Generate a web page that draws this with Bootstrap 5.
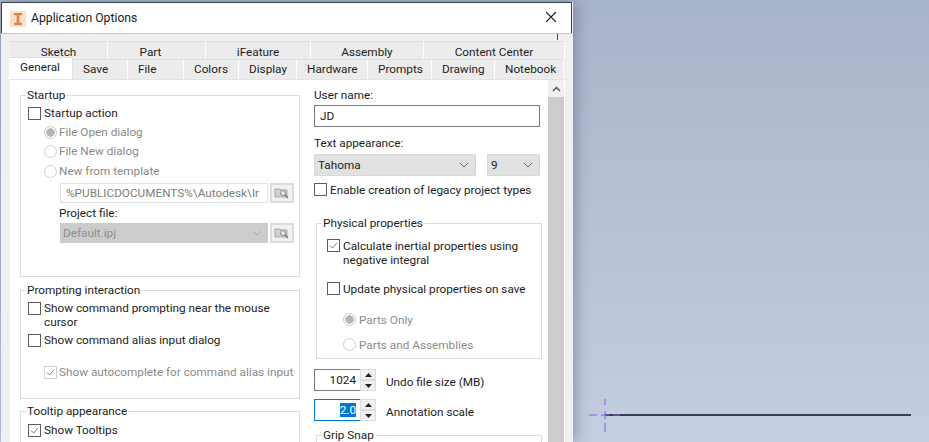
<!DOCTYPE html>
<html lang="en">
<head>
<meta charset="utf-8">
<title>Application Options</title>
<link href="https://cdn.jsdelivr.net/npm/bootstrap@5.3.0/dist/css/bootstrap.min.css" rel="stylesheet">
<style>
html,body{height:442px;overflow:hidden}
body{background:linear-gradient(180deg,#a8b4c9 0%,#b6c1d5 50%,#c3cee0 100%);font:11.750px/14px Roboto,"Noto Sans",sans-serif;color:#1c1c1c}
.app-window{width:572px;height:440px;margin-top:2px;margin-left:1px;background:#f0f0f0;box-shadow:2px 0 14px rgba(60,70,90,.45);overflow:hidden}
.title-strip{height:31px;width:571px;background:#fff;border:1px solid #3c4350;border-bottom:0;padding-left:8px;font-size:12.200px}
.title-rule{height:1px;background:#c9c9c9}
.app-mark{width:16px;height:16px;background:#fbe0c8;margin-right:5px;margin-top:1px}
.title-text{margin-top:-1px}
.x-btn{width:14px;height:14px;margin-right:13px;margin-top:-3px}
.tick{width:1px;height:6px;background:#444;margin-left:556px;margin-bottom:1px}
.tab-rows{margin-left:9px;width:555px}
.tab-row{flex-wrap:nowrap;border:0;margin:0}
.tab-row .nav-link{border:0;border-radius:0;padding:0;margin:0;color:#1c1c1c;background:#ececec;text-align:center;font-size:11.750px;border-top:1px solid #dedede;border-right:1px solid #fff}
.row-back .nav-link{height:18px;line-height:20px}
.row-back .nav-item:nth-child(2) .nav-link{padding-right:12px}
.row-front{height:20px;margin-left:-1px}
.row-front .nav-link{height:20px;line-height:19px;text-align:left;padding-left:10px}
.row-front .nav-link.active{height:22px;margin-top:-2px;padding-left:11px;background:#fff;color:#1c1c1c;border-top:1px solid #dedede;position:relative;z-index:1;line-height:19px}
.row-back .nav-item:nth-child(1){width:98px}.row-back .nav-item:nth-child(2){width:98px}.row-back .nav-item:nth-child(3){width:105px}.row-back .nav-item:nth-child(4){width:113px}.row-back .nav-item:nth-child(5){width:141px}
.row-front .nav-item:nth-child(1){width:64px}.row-front .nav-item:nth-child(2){width:55px}.row-front .nav-item:nth-child(3){width:56px}.row-front .nav-item:nth-child(4){width:55px}.row-front .nav-item:nth-child(5){width:58px}.row-front .nav-item:nth-child(6){width:71px}.row-front .nav-item:nth-child(7){width:64px}.row-front .nav-item:nth-child(8){width:63px}.row-front .nav-item:nth-child(9){width:69px}
.pane-wrap{margin-left:9px;width:555px;height:363px;background:#fff;border-top:1px solid #e3e3e3;overflow:hidden}
.pane-scroll{width:538px;padding:8px 0 0 10px;overflow:hidden;height:363px}
.col-left{width:280px;margin-right:14px;flex:none}
.col-right{width:228px;flex:none}
.vbar{width:16px;flex:none;background:#cdcdcd}
.vbar-up{height:17px;background:#f0f0f0;display:flex;align-items:center;justify-content:center}
.group-box{border:1px solid #dcdcdc;margin:0;padding:0 0 0 7px;min-width:0}
.group-box legend{float:none;width:auto;font-size:11.750px;line-height:14px;margin:0 0 0 -2px;padding:0 1px}
.box-phys legend{margin-left:-5px}
.box-startup{height:189px}
.box-prompt{height:116px;margin-top:6px}
.box-tip{height:60px;margin-top:5px}
.box-phys{height:143px;margin:19px 0 0 2px;width:226px;padding-left:10px}
.box-grip{height:40px;margin:7px 0 0 2px;width:226px}
.opt{display:flex;align-items:flex-start;margin:0;padding:0;min-height:13px}
.opt .form-check-input{width:13px;height:13px;margin:0 3px 0 0;flex:none;border:1px solid #5c5c5c;border-radius:0;background-color:#fff;box-shadow:none;float:none}
.opt .form-check-input[type=radio]{border-radius:50%;border-color:#c8c8c8}
.opt .form-check-input:checked[type=checkbox]{background-image:url("data:image/svg+xml,%3csvg xmlns='http://www.w3.org/2000/svg' viewBox='0 0 13 13'%3e%3cpath fill='none' stroke='%23666' stroke-width='1' d='M2.500 6.500l3 3 5-6'/%3e%3c/svg%3e");background-size:100%}
.opt .form-check-input:checked[type=radio]{background-image:none;background:radial-gradient(circle,#b5b5b5 0 4px,#fff 4.500px);border-color:#c8c8c8}
.opt .form-check-input:disabled{opacity:1;border-color:#cfcfcf}
.opt .form-check-input:disabled~.form-check-label{opacity:1;color:#8a8a8a}
.opt .form-check-label{line-height:14px;font-size:11.750px;color:#1c1c1c}
.col-left .opt .form-check-label{margin-top:-1px;margin-bottom:1px}
.col-left .ind16 .form-check-input{margin-right:2px}
.ind16{margin-left:16px}
.path-row{margin:4px 0 0 32px}
.path-field.form-control{width:208px;height:20px;padding:0 0 0 5px;font-size:11.750px;line-height:18px;border:1px solid #e2e2e2;border-radius:0;background:#fff;color:#7d7d7d;overflow:hidden;white-space:nowrap;box-shadow:none}
.browse-btn.btn{width:24px;height:20px;margin-left:2px;padding:0;border:2px solid #dcdcdc;border-radius:0;background:#f0f0f0;display:flex;align-items:center;justify-content:center;opacity:1}
.sub-label{margin:3px 0 3px 31px;line-height:14px}
.proj-select.form-select{width:208px;height:20px;padding:0 0 0 3px;font-size:11.750px;line-height:20px;border:0;border-radius:0;color:#8c8c8c;opacity:1;background-color:#ccc;background-size:10px 8px;background-position:right 6px center;background-image:url("data:image/svg+xml,%3csvg xmlns='http://www.w3.org/2000/svg' viewBox='0 0 10 6'%3e%3cpath fill='none' stroke='%23aaa' d='M1 1l4 4 4-4'/%3e%3c/svg%3e")}
.text-field.form-control{width:226px;height:22px;padding:0 0 0 5px;font-size:11.750px;border:1px solid #7a7a7a;border-radius:0;color:#1c1c1c;box-shadow:none}
.plain-label{line-height:14px;display:block}
.win-select.form-select{height:22px;padding:0 0 0 3px;font-size:11.750px;line-height:20px;border:1px solid #d9d9d9;border-radius:0;color:#1c1c1c;background-color:#e1e1e1;background-size:10px 8px;background-position:right 6px center;background-image:url("data:image/svg+xml,%3csvg xmlns='http://www.w3.org/2000/svg' viewBox='0 0 10 6'%3e%3cpath fill='none' stroke='%23666' d='M1 1l4 4 4-4'/%3e%3c/svg%3e")}
.sel-wide{width:162px}.sel-narrow{width:53px;margin-left:11px}
.spin-row{display:flex;align-items:center}
.spin-box{width:62px;height:22px;display:flex;flex:none;background:#dcdcdc;margin-right:10px}
.spin-num{width:46px;height:22px;border:1px solid #7a7a7a;border-right:0;background:#fff;text-align:right;padding:1px 4px 0 0;font-size:11.750px;line-height:18px}
.spin-box.focused .spin-num{border-color:#0078d7}
.spin-arrows{width:16px;display:flex;flex-direction:column;justify-content:space-between;padding:1px}
.spin-arrows span{height:9px;background:#f0f0f0;display:flex;align-items:center;justify-content:center}
.spin-cap{margin-top:3px}
.sel-text{background:#0078d7;color:#fff}
.sketch-area{position:absolute;left:588px;top:398px}
.tp3{margin-top:3px}.tp4{margin-top:4px}.tp5{margin-top:5px}.tp6{margin-top:6px}.tp7{margin-top:7px}.tp8{margin-top:8px}.tp9{margin-top:9px}.tp10{margin-top:10px}.tp11{margin-top:11px}.tp15{margin-top:15px}.tp17{margin-top:17px}.tp18{margin-top:18px}
</style>
</head>
<body>
<div class="app-window">
  <div class="title-strip d-flex align-items-center">
    <span class="app-mark d-flex align-items-center justify-content-center">
      <svg width="10" height="12" viewBox="0 0 10 12"><path d="M1 0h8v2.200H6.400v7.600H9V12H1V9.800H3.600V2.200H1z" fill="#d08a4c"/></svg>
    </span>
    <span class="title-text">Application Options</span>
    <svg class="x-btn ms-auto" viewBox="0 0 14 14"><path d="M2 2l10 10M12 2L2 12" stroke="#222" stroke-width="1.100" fill="none"/></svg>
  </div>
  <div class="title-rule"></div>
  <div class="tick"></div>
  <div class="tab-rows">
    <ul class="nav nav-tabs tab-row row-back">
      <li class="nav-item"><a class="nav-link" href="#">Sketch</a></li>
      <li class="nav-item"><a class="nav-link" href="#">Part</a></li>
      <li class="nav-item"><a class="nav-link" href="#">iFeature</a></li>
      <li class="nav-item"><a class="nav-link" href="#">Assembly</a></li>
      <li class="nav-item"><a class="nav-link" href="#">Content Center</a></li>
    </ul>
    <ul class="nav nav-tabs tab-row row-front">
      <li class="nav-item"><a class="nav-link active" href="#">General</a></li>
      <li class="nav-item"><a class="nav-link" href="#">Save</a></li>
      <li class="nav-item"><a class="nav-link" href="#">File</a></li>
      <li class="nav-item"><a class="nav-link" href="#">Colors</a></li>
      <li class="nav-item"><a class="nav-link" href="#">Display</a></li>
      <li class="nav-item"><a class="nav-link" href="#">Hardware</a></li>
      <li class="nav-item"><a class="nav-link" href="#">Prompts</a></li>
      <li class="nav-item"><a class="nav-link" href="#">Drawing</a></li>
      <li class="nav-item"><a class="nav-link" href="#">Notebook</a></li>
    </ul>
  </div>
  <div class="pane-wrap d-flex">
    <div class="pane-scroll d-flex">
      <div class="col-left">
        <fieldset class="group-box box-startup">
          <legend>Startup</legend>
          <div class="form-check opt tp5"><input class="form-check-input" type="checkbox" id="a1"><label class="form-check-label" for="a1">Startup action</label></div>
          <div class="form-check opt ind16 tp5"><input class="form-check-input" type="radio" name="s" id="a2" checked disabled><label class="form-check-label" for="a2">File Open dialog</label></div>
          <div class="form-check opt ind16 tp5"><input class="form-check-input" type="radio" name="s" id="a3" disabled><label class="form-check-label" for="a3">File New dialog</label></div>
          <div class="form-check opt ind16 tp6"><input class="form-check-input" type="radio" name="s" id="a4" disabled><label class="form-check-label" for="a4">New from template</label></div>
          <div class="d-flex path-row">
            <div class="form-control path-field">%PUBLICDOCUMENTS%\Autodesk\Ir</div>
            <button class="btn browse-btn" type="button" disabled aria-label="Browse"><svg width="16" height="14" viewBox="0 0 16 14"><path d="M1 3h5l1 1h6v7H1z" fill="#cfcfcf" stroke="#a8a8a8"/><circle cx="9" cy="7" r="2.500" fill="#e8e8e8" stroke="#8a8a8a"/><path d="M11 9l3 3" stroke="#777" stroke-width="1.500"/></svg></button>
          </div>
          <div class="sub-label">Project file:</div>
          <div class="d-flex path-row mt-0">
            <select class="form-select proj-select" disabled><option>Default.ipj</option></select>
            <button class="btn browse-btn" type="button" disabled aria-label="Browse"><svg width="16" height="14" viewBox="0 0 16 14"><path d="M1 3h5l1 1h6v7H1z" fill="#cfcfcf" stroke="#a8a8a8"/><circle cx="9" cy="7" r="2.500" fill="#e8e8e8" stroke="#8a8a8a"/><path d="M11 9l3 3" stroke="#777" stroke-width="1.500"/></svg></button>
          </div>
        </fieldset>
        <fieldset class="group-box box-prompt">
          <legend>Prompting interaction</legend>
          <div class="form-check opt tp5"><input class="form-check-input" type="checkbox" id="b1"><label class="form-check-label" for="b1">Show command prompting near the mouse cursor</label></div>
          <div class="form-check opt tp4"><input class="form-check-input" type="checkbox" id="b2"><label class="form-check-label" for="b2">Show command alias input dialog</label></div>
          <div class="form-check opt ind16 tp18"><input class="form-check-input" type="checkbox" id="b3" checked disabled><label class="form-check-label" for="b3">Show autocomplete for command alias input</label></div>
        </fieldset>
        <fieldset class="group-box box-tip">
          <legend>Tooltip appearance</legend>
          <div class="form-check opt tp6"><input class="form-check-input" type="checkbox" id="c1" checked><label class="form-check-label" for="c1">Show Tooltips</label></div>
        </fieldset>
      </div>
      <div class="col-right">
        <label class="plain-label" for="u1">User name:</label>
        <input class="form-control text-field tp3" id="u1" type="text" value="JD">
        <label class="plain-label tp9">Text appearance:</label>
        <div class="d-flex tp4">
          <select class="form-select win-select sel-wide"><option>Tahoma</option></select>
          <select class="form-select win-select sel-narrow"><option>9</option></select>
        </div>
        <div class="form-check opt tp7"><input class="form-check-input" type="checkbox" id="d1"><label class="form-check-label" for="d1">Enable creation of legacy project types</label></div>
        <fieldset class="group-box box-phys">
          <legend>Physical properties</legend>
          <div class="form-check opt tp9"><input class="form-check-input" type="checkbox" id="e1" checked><label class="form-check-label" for="e1">Calculate inertial properties using negative integral</label></div>
          <div class="form-check opt tp15"><input class="form-check-input" type="checkbox" id="e2"><label class="form-check-label" for="e2">Update physical properties on save</label></div>
          <div class="form-check opt ind16 tp17"><input class="form-check-input" type="radio" name="p" id="e3" checked disabled><label class="form-check-label" for="e3">Parts Only</label></div>
          <div class="form-check opt ind16 tp11"><input class="form-check-input" type="radio" name="p" id="e4" disabled><label class="form-check-label" for="e4">Parts and Assemblies</label></div>
        </fieldset>
        <div class="spin-row tp10">
          <div class="spin-box"><div class="spin-num">1024</div><div class="spin-arrows"><span><svg width="7" height="4"><path d="M3.500 0L7 4H0z" fill="#222"/></svg></span><span><svg width="7" height="4"><path d="M0 0h7L3.500 4z" fill="#222"/></svg></span></div></div>
          <span class="spin-cap">Undo file size (MB)</span>
        </div>
        <div class="spin-row tp8">
          <div class="spin-box focused"><div class="spin-num"><span class="sel-text">2.0</span></div><div class="spin-arrows"><span><svg width="7" height="4"><path d="M3.500 0L7 4H0z" fill="#222"/></svg></span><span><svg width="7" height="4"><path d="M0 0h7L3.500 4z" fill="#222"/></svg></span></div></div>
          <span class="spin-cap">Annotation scale</span>
        </div>
        <fieldset class="group-box box-grip"><legend>Grip Snap</legend></fieldset>
      </div>
    </div>
    <div class="vbar">
      <div class="vbar-up"><svg width="9" height="6" viewBox="0 0 9 6"><path d="M1 5l3.500-3.500L8 5" fill="none" stroke="#555" stroke-width="1.500"/></svg></div>
    </div>
  </div>
</div>
<svg class="sketch-area" width="330" height="36" viewBox="588 398 330 36">
  <path d="M605 415H911" stroke="#3a3f49" stroke-width="2"/>
  <path d="M589 415h8M601 415h8M613 415h7M605 399v6M605 411v8M605 423v9" stroke="#8a5cf0" stroke-width="1" fill="none"/>
</svg>
<script src="https://cdn.jsdelivr.net/npm/bootstrap@5.3.0/dist/js/bootstrap.bundle.min.js"></script>
</body>
</html>
